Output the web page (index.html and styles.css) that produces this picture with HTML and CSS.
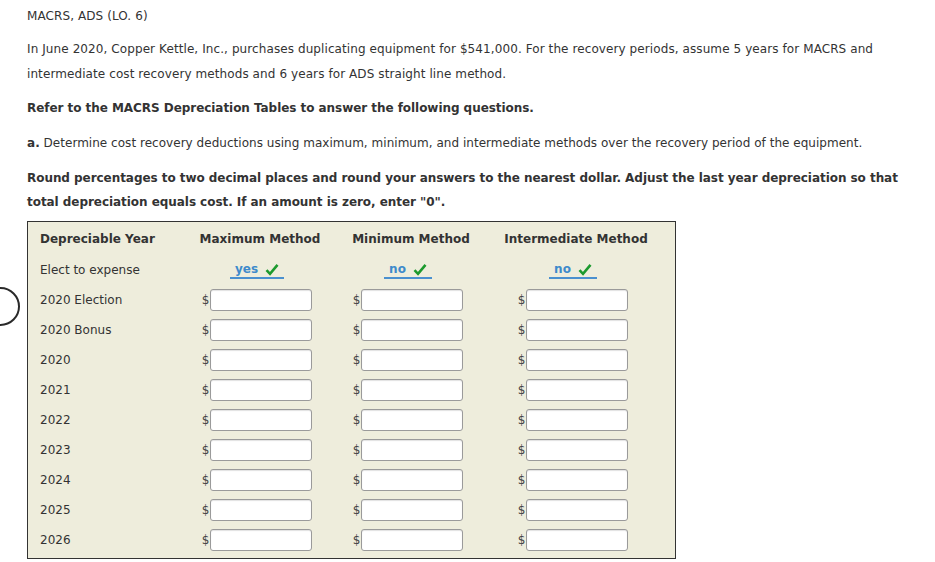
FILE: index.html
```html
<!DOCTYPE html>
<html>
<head>
<meta charset="utf-8">
<link rel="stylesheet" href="styles.css">
</head>
<body>
<div class="nav-circle"></div>
<div class="page">
  <p class="title">MACRS, ADS (LO. 6)</p>
  <p class="para">In June 2020, Copper Kettle, Inc., purchases duplicating equipment for $541,000. For the recovery periods, assume 5 years for MACRS and intermediate cost recovery methods and 6 years for ADS straight line method.</p>
  <p class="bold refer">Refer to the MACRS Depreciation Tables to answer the following questions.</p>
  <p class="qa"><b>a.</b> Determine cost recovery deductions using maximum, minimum, and intermediate methods over the recovery period of the equipment.</p>
  <p class="bold round">Round percentages to two decimal places and round your answers to the nearest dollar. Adjust the last year depreciation so that total depreciation equals cost. If an amount is zero, enter "0".</p>

  <div class="table">
    <div class="cell head label">Depreciable Year</div>
    <div class="cell head">Maximum Method</div>
    <div class="cell head">Minimum Method</div>
    <div class="cell head">Intermediate Method</div>

    <div class="cell label">Elect to expense</div>
    <div class="cell field"><span class="select sel-yes">yes <svg class="check" viewBox="0 0 14 13"><path d="M1.5 7.2 L5 10.8 L12.5 1.8" fill="none" stroke="#1c9a2e" stroke-width="2.6"/></svg></span></div>
    <div class="cell field"><span class="select">no <svg class="check" viewBox="0 0 14 13"><path d="M1.5 7.2 L5 10.8 L12.5 1.8" fill="none" stroke="#1c9a2e" stroke-width="2.6"/></svg></span></div>
    <div class="cell field"><span class="select">no <svg class="check" viewBox="0 0 14 13"><path d="M1.5 7.2 L5 10.8 L12.5 1.8" fill="none" stroke="#1c9a2e" stroke-width="2.6"/></svg></span></div>

    <div class="cell label">2020 Election</div>
    <div class="cell field"><span class="money">$<span class="input"></span></span></div>
    <div class="cell field"><span class="money">$<span class="input"></span></span></div>
    <div class="cell field"><span class="money">$<span class="input"></span></span></div>

    <div class="cell label">2020 Bonus</div>
    <div class="cell field"><span class="money">$<span class="input"></span></span></div>
    <div class="cell field"><span class="money">$<span class="input"></span></span></div>
    <div class="cell field"><span class="money">$<span class="input"></span></span></div>

    <div class="cell label">2020</div>
    <div class="cell field"><span class="money">$<span class="input"></span></span></div>
    <div class="cell field"><span class="money">$<span class="input"></span></span></div>
    <div class="cell field"><span class="money">$<span class="input"></span></span></div>

    <div class="cell label">2021</div>
    <div class="cell field"><span class="money">$<span class="input"></span></span></div>
    <div class="cell field"><span class="money">$<span class="input"></span></span></div>
    <div class="cell field"><span class="money">$<span class="input"></span></span></div>

    <div class="cell label">2022</div>
    <div class="cell field"><span class="money">$<span class="input"></span></span></div>
    <div class="cell field"><span class="money">$<span class="input"></span></span></div>
    <div class="cell field"><span class="money">$<span class="input"></span></span></div>

    <div class="cell label">2023</div>
    <div class="cell field"><span class="money">$<span class="input"></span></span></div>
    <div class="cell field"><span class="money">$<span class="input"></span></span></div>
    <div class="cell field"><span class="money">$<span class="input"></span></span></div>

    <div class="cell label">2024</div>
    <div class="cell field"><span class="money">$<span class="input"></span></span></div>
    <div class="cell field"><span class="money">$<span class="input"></span></span></div>
    <div class="cell field"><span class="money">$<span class="input"></span></span></div>

    <div class="cell label">2025</div>
    <div class="cell field"><span class="money">$<span class="input"></span></span></div>
    <div class="cell field"><span class="money">$<span class="input"></span></span></div>
    <div class="cell field"><span class="money">$<span class="input"></span></span></div>

    <div class="cell label">2026</div>
    <div class="cell field"><span class="money">$<span class="input"></span></span></div>
    <div class="cell field"><span class="money">$<span class="input"></span></span></div>
    <div class="cell field"><span class="money">$<span class="input"></span></span></div>
  </div>
</div>
</body>
</html>
```

FILE: styles.css
```css
html, body {
  margin: 0;
  padding: 0;
  background: #fff;
}
body {
  font-family: "DejaVu Sans", Verdana, sans-serif;
  font-size: 12px;
  color: #333;
  position: relative;
}
.page {
  padding: 4px 0 0 27px;
  width: 880px;
}
p {
  margin: 0;
  line-height: 25px;
  letter-spacing: 0.09px;
}
.bold {
  font-weight: bold;
  letter-spacing: -0.05px;
}
.title {
  margin-bottom: 8px;
}
.para {
  margin-bottom: 9px;
}
.refer {
  margin-bottom: 10px;
}
.qa {
  margin-bottom: 10px;
  letter-spacing: 0.03px;
}
.round {
  line-height: 24px;
  margin-bottom: 7px;
}
.nav-circle {
  position: absolute;
  left: -19px;
  top: 287px;
  width: 35px;
  height: 35px;
  border: 2px solid #2a2a2a;
  border-radius: 50%;
}
.table {
  display: grid;
  grid-template-columns: 157px 150px 152px 178px;
  grid-template-rows: 33px;
  grid-auto-rows: 30px;
  width: 637px;
  padding: 0 10px 3px 0;
  background: #eeeddc;
  border: 1px solid #333;
}
.cell {
  display: flex;
  align-items: center;
  justify-content: center;
}
.cell.label {
  justify-content: flex-start;
  padding-left: 12px;
}
.cell.field {
  padding-right: 6px;
}
.head {
  font-weight: bold;
  padding-top: 1px;
}
.select {
  display: inline-flex;
  align-items: center;
  gap: 7px;
  color: #3d8acb;
  font-weight: bold;
  padding: 0 5px 1px 5px;
  border-bottom: 2px solid #4a90cf;
  margin-top: 1px;
}
.check {
  width: 14px;
  height: 13px;
}
.money {
  display: inline-flex;
  align-items: center;
  color: #444;
}
.input {
  display: block;
  width: 100px;
  height: 20px;
  margin-left: 1px;
  background: #fff;
  border: 1px solid #9a9a9a;
  border-radius: 3px;
  box-shadow: inset 0 1px 1px rgba(0,0,0,0.12);
}
```
